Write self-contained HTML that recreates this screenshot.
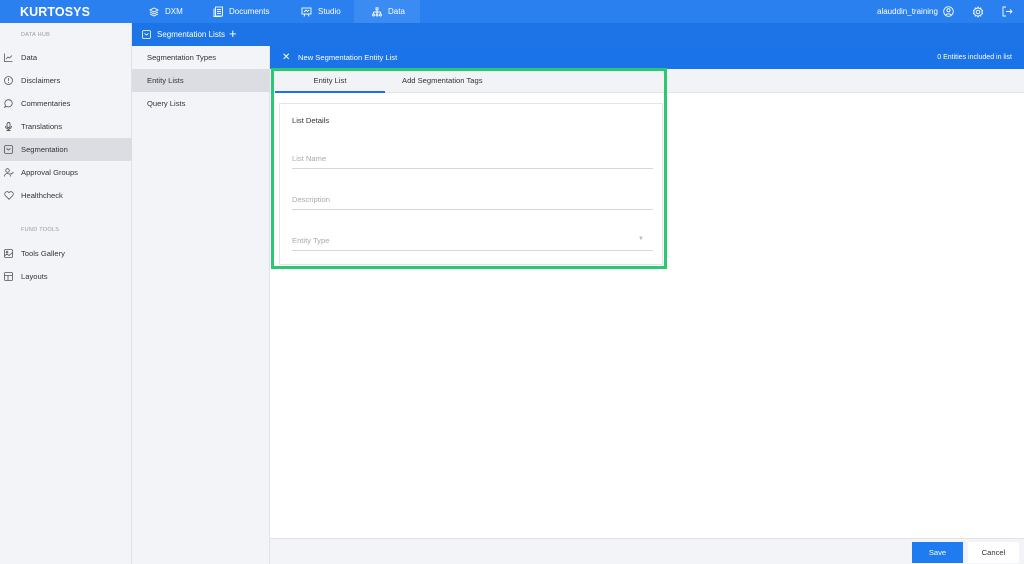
<!DOCTYPE html>
<html><head><style>
*{box-sizing:border-box;margin:0;padding:0}
body{width:1024px;height:564px;overflow:hidden;font-family:"Liberation Sans",sans-serif;font-size:8px;color:#333;background:#fff;position:relative}
.abs{position:absolute}
.top{left:0;top:0;width:1024px;height:23px;background:#2a80ee;color:#fff}
.logo{left:20px;top:5px;font-weight:bold;font-size:12.5px;letter-spacing:0.1px}
.nav{top:0;height:23px;line-height:23px;font-size:8px;color:#fff}
.nav svg{vertical-align:middle;margin-right:6px}
.side{left:0;top:23px;width:132px;height:541px;background:#f3f4f7;border-right:1px solid #e0e1e5}
.si{position:absolute;left:0;width:132px;height:23px;line-height:23px;padding-left:21px;font-size:7.6px;color:#333}
.si svg{position:absolute;left:4px;top:7px}
.hdr{position:absolute;left:21px;font-size:5.5px;color:#999;letter-spacing:0.3px}
.bar2{left:132px;top:23px;width:892px;height:23px;background:#1c74e6;color:#fff;font-size:8px;line-height:23px}
.mid{left:132px;top:46px;width:138px;height:518px;background:#f3f4f7;border-right:1px solid #e2e3e7}
.mi{position:absolute;left:0;width:138px;height:23px;line-height:23px;padding-left:15px;font-size:7.6px;color:#333}
.ph{left:270px;top:46px;width:754px;height:23px;background:#1a73e8;color:#fff;line-height:23px;font-size:7.6px}
.tabs{left:270px;top:69px;width:754px;height:24px;background:#f2f3f6;border-bottom:1px solid #e3e4e8}
.card{left:279px;top:103px;width:384px;height:162px;border:1px solid #e4e5e9;background:#fff}
.fld{position:absolute;left:12px;width:361px;border-bottom:1px solid #d6d7dc;font-size:7.6px;color:#aaa;height:15px}
.green{left:271px;top:68px;width:396px;height:201px;border:3px solid #29c872}
.foot{left:270px;top:538px;width:754px;height:26px;background:#f3f4f7;border-top:1px solid #e2e3e7}
</style></head><body>
<div class="abs top">
 <div class="abs logo">KURTOSYS</div>
 <div class="abs nav" style="left:149px"><svg width="10" height="10" viewBox="0 0 10 10" fill="none" stroke="#fff" stroke-width="0.9"><path d="M5 1L9 3 5 5 1 3Z M1 5L5 7 9 5 M1 7L5 9 9 7"/></svg>DXM</div>
 <div class="abs nav" style="left:213px"><svg width="10" height="11" viewBox="0 0 10 11" fill="none" stroke="#fff" stroke-width="0.9"><rect x="2.5" y="1" width="7" height="9"/><path d="M1 2.5V10.5H8 M4 3.5h4M4 5.5h4M4 7.5h4"/></svg>Documents</div>
 <div class="abs nav" style="left:301px"><svg width="11" height="10" viewBox="0 0 11 10" fill="none" stroke="#fff" stroke-width="0.9"><rect x="1" y="1" width="9" height="6"/><path d="M3 5l2-2 1.5 1.5L8 3 M4 7l-1 2.5M7 7l1 2.5"/></svg>Studio</div>
 <div class="abs" style="left:354px;top:0;width:66px;height:23px;background:#3b8cf2"></div>
 <div class="abs nav" style="left:372px"><svg width="10" height="10" viewBox="0 0 10 10" fill="none" stroke="#fff" stroke-width="0.9"><rect x="4" y="0.8" width="2" height="2"/><path d="M5 2.8V5M1.5 5h7M1.5 5v2M5 5v2M8.5 5v2"/><circle cx="1.5" cy="8" r="1"/><circle cx="5" cy="8" r="1"/><circle cx="8.5" cy="8" r="1"/></svg>Data</div>
 <div class="abs nav" style="left:877px">alauddin_training</div>
 <svg class="abs" style="left:943px;top:6px" width="11" height="11" viewBox="0 0 11 11" fill="none" stroke="#fff" stroke-width="0.9"><circle cx="5.5" cy="5.5" r="4.8"/><circle cx="5.5" cy="4.3" r="1.6"/><path d="M2.8 9c1-1.6 4.4-1.6 5.4 0"/></svg>
 <svg class="abs" style="left:972px;top:6px" width="12" height="12" viewBox="0 0 12 12" fill="none" stroke="#fff" stroke-width="0.9"><circle cx="6" cy="6" r="1.8"/><path d="M6 1l1 1.5 1.7-.5.3 1.7 1.6.8-.8 1.5.8 1.5-1.6.8-.3 1.7-1.7-.5L6 11 5 9.5l-1.7.5-.3-1.7-1.6-.8.8-1.5-.8-1.5 1.6-.8.3-1.7 1.7.5z"/></svg>
 <svg class="abs" style="left:1002px;top:6px" width="11" height="11" viewBox="0 0 11 11" fill="none" stroke="#fff" stroke-width="0.9"><path d="M4 1H1v9h3 M4 5.5h6 M8 3.5l2 2-2 2"/></svg>
</div>
<div class="abs side">
 <div class="hdr" style="top:9px">DATA HUB</div>
 <div class="si" style="top:23px"><svg width="9" height="9" viewBox="0 0 9 9" fill="none" stroke="#555" stroke-width="0.8"><path d="M0.5 0.5V8.5H8.5M2 6l2-2 1.5 1L8 2.5"/></svg>Data</div>
 <div class="si" style="top:46px"><svg width="9" height="9" viewBox="0 0 9 9" fill="none" stroke="#555" stroke-width="0.8"><circle cx="4.5" cy="4.5" r="4"/><path d="M4.5 2v3M4.5 6v1"/></svg>Disclaimers</div>
 <div class="si" style="top:69px"><svg width="9" height="9" viewBox="0 0 9 9" fill="none" stroke="#555" stroke-width="0.8"><path d="M4.5 0.7a3.8 3.6 0 1 1-2 6.7L0.7 8.3l.8-2A3.8 3.6 0 0 1 4.5 0.7z"/></svg>Commentaries</div>
 <div class="si" style="top:92px"><svg width="9" height="9" viewBox="0 0 9 9" fill="none" stroke="#555" stroke-width="0.9"><rect x="3" y="0.5" width="3" height="5" rx="1.5"/><path d="M1.5 4a3 3 0 0 0 6 0M4.5 7v1.5M2.5 8.5h4"/></svg>Translations</div>
 <div class="si" style="top:115px;background:#dcdde3"><svg width="9" height="9" viewBox="0 0 9 9" fill="none" stroke="#555" stroke-width="0.8"><rect x="0.5" y="0.5" width="8" height="8" rx="1.5"/><path d="M2.5 3.5l2 1.5 2-1.5"/></svg>Segmentation</div>
 <div class="si" style="top:138px"><svg width="10" height="9" viewBox="0 0 10 9" fill="none" stroke="#555" stroke-width="0.8"><circle cx="3.5" cy="2.5" r="1.8"/><path d="M0.5 8.5c0-2 1.3-3 3-3s3 1 3 3M6.5 5l1 1 2-2"/></svg>Approval Groups</div>
 <div class="si" style="top:161px"><svg width="10" height="9" viewBox="0 0 10 9" fill="none" stroke="#555" stroke-width="0.8"><path d="M5 8.3L1.2 4.5A2.2 2.2 0 0 1 5 1.6a2.2 2.2 0 0 1 3.8 2.9z"/></svg>Healthcheck</div>
 <div class="hdr" style="top:204px">FUND TOOLS</div>
 <div class="si" style="top:219px"><svg width="9" height="9" viewBox="0 0 9 9" fill="none" stroke="#555" stroke-width="0.8"><rect x="0.5" y="0.5" width="8" height="8" rx="1"/><circle cx="3" cy="3" r="0.9"/><path d="M0.5 7l2.5-2 2 1.5 3.5-3"/></svg>Tools Gallery</div>
 <div class="si" style="top:242px"><svg width="9" height="9" viewBox="0 0 9 9" fill="none" stroke="#555" stroke-width="0.8"><rect x="0.5" y="0.5" width="8" height="8" rx="1"/><path d="M0.5 3.5h8M4 3.5v5"/></svg>Layouts</div>
</div>
<div class="abs bar2"><svg style="position:absolute;left:10px;top:7px" width="9" height="9" viewBox="0 0 9 9" fill="none" stroke="#fff" stroke-width="0.8"><rect x="0.5" y="0.5" width="8" height="8" rx="1.5"/><path d="M2.5 3.5l2 1.5 2-1.5"/></svg><span style="position:absolute;left:25px">Segmentation Lists</span><span style="position:absolute;left:97px;font-size:13px;top:-1px">+</span></div>
<div class="abs mid">
 <div class="mi" style="top:0">Segmentation Types</div>
 <div class="mi" style="top:23px;background:#dcdde3">Entity Lists</div>
 <div class="mi" style="top:46px">Query Lists</div>
</div>
<div class="abs ph"><span style="position:absolute;left:12px;font-size:10px">✕</span><span style="position:absolute;left:28px">New Segmentation Entity List</span><span style="position:absolute;right:12px;font-size:7px">0 Entities included in list</span></div>
<div class="abs tabs">
 <div class="abs" style="left:5px;top:0;width:110px;height:24px;line-height:24px;text-align:center;font-size:7.6px;border-bottom:2px solid #1a73e8">Entity List</div>
 <div class="abs" style="left:132px;top:0;line-height:24px;font-size:7.6px">Add Segmentation Tags</div>
</div>
<div class="abs card">
 <div class="abs" style="left:12px;top:12px;font-size:7.6px;color:#333">List Details</div>
 <div class="fld" style="top:50px">List Name</div>
 <div class="fld" style="top:91px">Description</div>
 <div class="fld" style="top:132px">Entity Type<span style="position:absolute;right:9px;top:0;font-size:6px;color:#bbb">▼</span></div>
</div>
<div class="abs green"></div>
<div class="abs foot">
 <div class="abs" style="left:642px;top:3px;width:51px;height:21px;background:#1f7cf0;color:#fff;text-align:center;line-height:21px;font-size:7.6px">Save</div>
 <div class="abs" style="left:698px;top:3px;width:51px;height:21px;background:#fff;color:#333;text-align:center;line-height:21px;font-size:7.6px">Cancel</div>
</div>
</body></html>
